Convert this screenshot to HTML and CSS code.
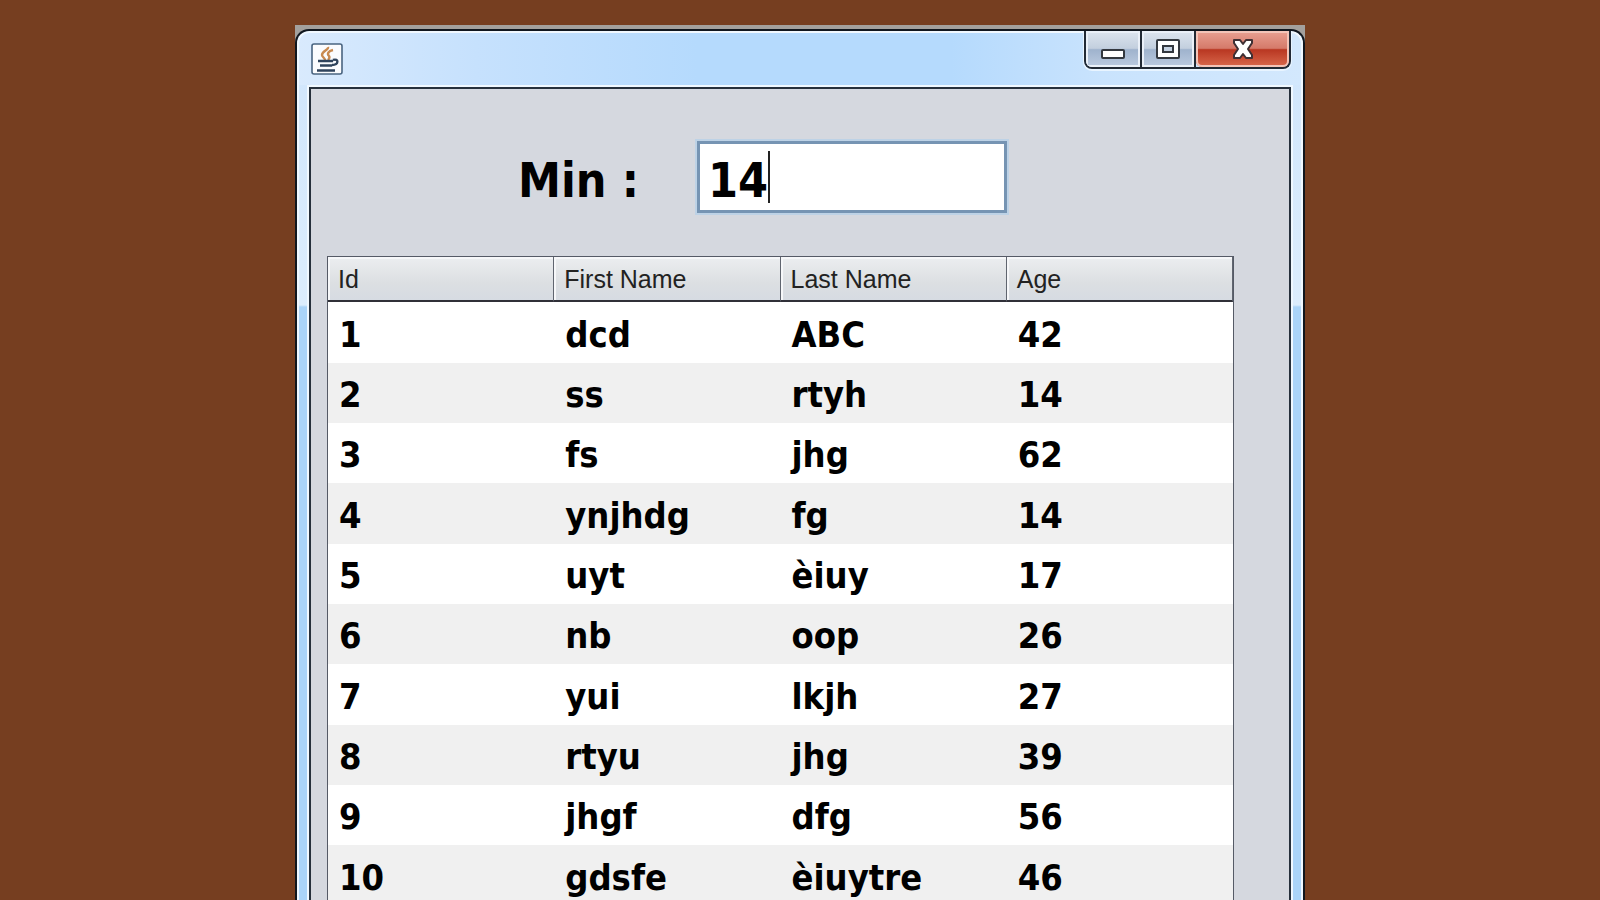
FILE: index.html
```html
<!DOCTYPE html>
<html lang="en">
<head>
<meta charset="utf-8">
<title>Age filter</title>
<link rel="stylesheet" href="styles.css">
</head>
<body>
<main class="backdrop">
  <section class="window">
    <header class="titlebar">
      <svg class="app-icon" viewBox="0 0 32 32" aria-hidden="true">
        <rect x="1" y="1" width="30" height="30" rx="2" fill="#fbfcfe" stroke="#4a6480" stroke-width="1.6"/>
        <path d="M17 4c1 3-6 4-6 8 0 2 3 3 3 5M22 7c-5 1-6 4-4 6 1 1.500 0 3-1 4" fill="none" stroke="#c98a50" stroke-width="2.400"/>
        <path d="M7 18h15M9 22.500h12M6 27.500h18" fill="none" stroke="#2f435c" stroke-width="2.400"/>
        <path d="M22 17c6-2 6 5-1 5" fill="none" stroke="#2f435c" stroke-width="2.400"/>
      </svg>
      <div class="controls">
        <button class="control minimize" type="button" aria-label="Minimize">
          <svg class="glyph" viewBox="0 0 26 22"><rect x="2" y="12" width="22" height="8" rx="1" fill="#fff" stroke="#33383f" stroke-width="2"/></svg>
        </button>
        <button class="control maximize" type="button" aria-label="Maximize">
          <svg class="glyph" viewBox="0 0 26 22"><rect x="2" y="2" width="22" height="18" rx="1" fill="#fff" stroke="#33383f" stroke-width="2"/><rect x="8" y="8" width="10" height="6" fill="#c5d2e2" stroke="#33383f" stroke-width="2"/></svg>
        </button>
        <button class="control close" type="button" aria-label="Close">
          <svg class="glyph" viewBox="0 0 26 22"><path d="M4 2h6l3 4 3-4h6v3l-4 6 4 6v3h-6l-3-4-3 4H4v-3l4-6-4-6z" fill="#fff" stroke="#3f3034" stroke-width="2" stroke-linejoin="round"/></svg>
        </button>
      </div>
    </header>
    <div class="panel">
      <form class="filter">
        <label class="filter-label" for="min">Min :</label>
        <div class="field">
          <input class="field-input" id="min" type="text" value="14">
          <span class="caret"></span>
        </div>
      </form>
      <table class="people">
        <thead>
          <tr><th>Id</th><th>First Name</th><th>Last Name</th><th>Age</th></tr>
        </thead>
        <tbody>
          <tr><td>1</td><td>dcd</td><td>ABC</td><td>42</td></tr>
          <tr><td>2</td><td>ss</td><td>rtyh</td><td>14</td></tr>
          <tr><td>3</td><td>fs</td><td>jhg</td><td>62</td></tr>
          <tr><td>4</td><td>ynjhdg</td><td>fg</td><td>14</td></tr>
          <tr><td>5</td><td>uyt</td><td>èiuy</td><td>17</td></tr>
          <tr><td>6</td><td>nb</td><td>oop</td><td>26</td></tr>
          <tr><td>7</td><td>yui</td><td>lkjh</td><td>27</td></tr>
          <tr><td>8</td><td>rtyu</td><td>jhg</td><td>39</td></tr>
          <tr><td>9</td><td>jhgf</td><td>dfg</td><td>56</td></tr>
          <tr><td>10</td><td>gdsfe</td><td>èiuytre</td><td>46</td></tr>
        </tbody>
      </table>
    </div>
  </section>
</main>
</body>
</html>
```
FILE: styles.css
```css
* { box-sizing: border-box; }

body {
  margin: 0;
  height: 100vh;
  overflow: hidden;
  padding: 25px 16px 0;
  background: #763e20;
  color: #000;
  font-family: "DejaVu Sans Condensed", "DejaVu Sans", sans-serif;
}

.backdrop {
  max-width: 1010px;
  margin: 0 auto;
  padding-top: 4px;
  background: #a3a09d;
}

.window {
  padding: 0 12px;
  border: 2px solid #10161e;
  border-bottom: 0;
  border-radius: 14px 14px 0 0;
  box-shadow: inset 0 0 0 2px #f0f8ff;
  background:
    linear-gradient(90deg, #d9eafd 0, #c6e1fd 180px, #b5dafd 400px, #b5dafd 65%, #c9e3fd 80%, #d3e8fd 100%) 0 0 / 100% 54px no-repeat,
    linear-gradient(#cfe5fc 0, #dcedfd 274px, #aad4f9 276px);
}

.titlebar {
  display: flex;
  justify-content: space-between;
  align-items: flex-start;
  height: 56px;
}

.app-icon {
  width: 32px;
  height: 32px;
  margin: 12px 0 0 2px;
}

.controls {
  display: flex;
  border: 2px solid #222a35;
  border-top: 0;
  border-radius: 0 0 8px 8px;
  overflow: hidden;
  box-shadow: 0 1px 0 1px #e8f4ff;
}

.control {
  display: flex;
  align-items: center;
  justify-content: center;
  width: 54px;
  height: 36px;
  padding: 0;
  border: 0;
  border-right: 2px solid #222a35;
  box-shadow: inset 0 0 0 2px #eaf0f8;
  background: linear-gradient(#dde5ef 0, #c3cfde 48%, #9fb3cd 52%, #bccbe0 100%);
}

.minimize { width: 56px; }

.close {
  width: 93px;
  border-right: 0;
  border-radius: 0 0 6px 6px;
  box-shadow: inset 0 0 0 2px #f3c4b8;
  background: linear-gradient(#e9a193 0, #d57a6a 48%, #b93722 52%, #d9694d 100%);
}

.glyph {
  width: 26px;
  height: 22px;
}

.panel {
  padding: 52px 55px 0 16px;
  border: 2px solid #26303c;
  border-bottom: 0;
  box-shadow: 0 0 0 2px #f0f8ff;
  background: #d5d8df;
}

.filter {
  display: flex;
  justify-content: center;
  align-items: center;
  gap: 58px;
  margin: 0 36px 43px 0;
  font-size: 48px;
  font-weight: bold;
}

.filter-label { padding-top: 6px; }

.field {
  position: relative;
  width: 310px;
}

.field-input {
  display: block;
  width: 100%;
  height: 72px;
  padding: 6px 8px 0;
  border: 3px solid #7694b3;
  outline: 2px solid #bdd2e6;
  background: #fff;
  color: inherit;
  font: inherit;
}

.caret {
  position: absolute;
  left: calc(11px + 2ch);
  top: 10px;
  width: 2px;
  height: 52px;
  background: #222;
}

.people {
  width: 100%;
  table-layout: fixed;
  border-collapse: separate;
  border-spacing: 0;
  border: 1px solid #555a66;
  background: #fff;
}

.people th {
  height: 45px;
  padding: 2px 0 0 10px;
  border-right: 1px solid #60656f;
  border-bottom: 2px solid #303038;
  box-shadow: inset 2px 2px 0 #f6f7f9;
  background: linear-gradient(#eceef0, #dcdfe2 60%, #d6dbe2);
  color: #222;
  font: 25px "Liberation Sans", Arial, sans-serif;
  text-align: left;
}

.people td {
  height: 60px;
  padding: 4px 0 0 11px;
  font-size: 36px;
  font-weight: bold;
  line-height: 44px;
}

.people tr:nth-child(3n + 1) td { height: 61px; }

.people tbody tr:nth-child(even) { background: #f0f0f0; }
```
